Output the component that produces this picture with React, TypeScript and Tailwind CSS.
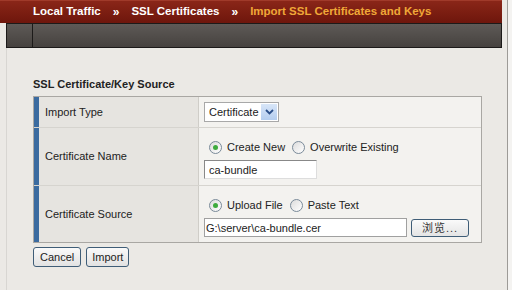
function Radio({ checked }: { checked?: boolean }) {
  return (
    <span className="w-[13px] h-[13px] rounded-full border border-[#7a8a99] bg-gradient-to-br from-[#dcdcdc] to-white flex items-center justify-center">
      {checked && <span className="w-[5px] h-[5px] rounded-full bg-[#3dab3d]" />}
    </span>
  );
}

function Row({
  label,
  children,
  height,
  last,
  pad = "",
}: {
  label: string;
  children: React.ReactNode;
  height: string;
  last?: boolean;
  pad?: string;
}) {
  return (
    <div className={`flex ${height} ${last ? "" : "border-b border-[#d6d4cf]"}`}>
      <div className="w-[5px] bg-[#3b6ba0]" />
      <div className="w-[160px] bg-[#e6e4e0] border-r border-[#cfcdc8] flex items-center pl-[6px] text-[11px] text-[#222]">
        {label}
      </div>
      <div className={`flex-1 bg-[#f3f2ef] flex flex-col justify-center pl-[5px] gap-[5px] ${pad}`}>
        {children}
      </div>
    </div>
  );
}

export default function App() {
  return (
    <div
      className="w-[512px] h-[290px] bg-[#ebe9e5] relative overflow-hidden"
      style={{ fontFamily: '"Liberation Sans", Arial, "Noto Sans CJK SC", sans-serif' }}
    >
      <div className="flex h-full">
        <div className="w-[502px] flex flex-col">
          <div className="h-[23px] bg-gradient-to-b from-[#8a2618] to-[#6e160c] border-t border-[#a03a2a] flex items-center pl-[33px] text-[11.5px] font-bold text-white">
            <span>Local Traffic</span>
            <span className="mx-[12px] text-[12px]">»</span>
            <span>SSL Certificates</span>
            <span className="mx-[12px] text-[12px]">»</span>
            <span className="text-[#f0a838]">Import SSL Certificates and Keys</span>
          </div>
          <div className="ml-[6px] h-[25px] bg-gradient-to-b from-[#5e5a57] to-[#46423f] border border-[#1c1a19] flex">
            <div className="w-[26px] border-r border-[#1c1a19]" />
          </div>
          <div className="ml-[6px] flex-1 border-l border-[#d8d6d2] pl-[26px] pt-[30px]">
            <div className="text-[11px] leading-[13px] font-bold text-[#222] mb-[5px]">SSL Certificate/Key Source</div>
            <div className="w-[449px] border border-[#a9a7a3]">
              <Row label="Import Type" height="h-[31px]">
                <div className="w-[75px] h-[20px] border border-[#a8a8a8] bg-white flex items-center justify-between pl-[4px] pr-[1px] text-[11px] text-[#222]">
                  <span>Certificate</span>
                  <span className="w-[16px] h-[16px] bg-gradient-to-b from-[#d8e6f8] to-[#b4cdef] flex items-center justify-center">
                    <svg width="9" height="6" viewBox="0 0 9 6">
                      <path d="M1 1 L4.5 4.5 L8 1" stroke="#2b4f8a" strokeWidth="1.8" fill="none" />
                    </svg>
                  </span>
                </div>
              </Row>
              <Row label="Certificate Name" height="h-[58px]" pad="pt-[5px]">
                <div className="flex items-center gap-[5px] text-[11px] text-[#222] pl-[5px]">
                  <Radio checked />
                  <span className="mr-[2px]">Create New</span>
                  <Radio />
                  <span>Overwrite Existing</span>
                </div>
                <div className="w-[113px] h-[19px] border border-[#888] border-r-[#ddd] border-b-[#ddd] bg-white flex items-center pl-[4px] text-[11px] text-[#222]">
                  ca-bundle
                </div>
              </Row>
              <Row label="Certificate Source" height="h-[56px]" last pad="pt-[6px]">
                <div className="flex items-center gap-[5px] text-[11px] text-[#222] pl-[5px]">
                  <Radio checked />
                  <span className="mr-[2px]">Upload File</span>
                  <Radio />
                  <span>Paste Text</span>
                </div>
                <div className="flex items-center gap-[4px]">
                  <div className="w-[203px] h-[19px] border border-[#a0a0a0] bg-white flex items-center pl-[1px] text-[11px] text-[#222]">
                    G:\server\ca-bundle.cer
                  </div>
                  <div className="w-[58px] h-[18px] border border-[#3f5d77] rounded-[3px] bg-gradient-to-b from-[#fafafa] to-[#e4e4e4] flex items-center justify-center text-[11px] text-[#333] tracking-[1px]">
                    浏览...
                  </div>
                </div>
              </Row>
            </div>
            <div className="flex gap-[5px] mt-[4px]">
              <div className="h-[20px] px-[6px] border border-[#3f5d77] rounded-[3px] bg-gradient-to-b from-[#fafafa] to-[#e2e2e2] flex items-center text-[11px] text-[#222]">
                Cancel
              </div>
              <div className="h-[20px] px-[5px] border border-[#3f5d77] rounded-[3px] bg-gradient-to-b from-[#fafafa] to-[#e2e2e2] flex items-center text-[11px] text-[#222]">
                Import
              </div>
            </div>
          </div>
        </div>
        <div className="w-[5px]" />
        <div className="w-[1px] bg-[#9d9b97]" />
        <div className="flex-1 bg-[#f4f3f1]" />
      </div>
    </div>
  );
}
